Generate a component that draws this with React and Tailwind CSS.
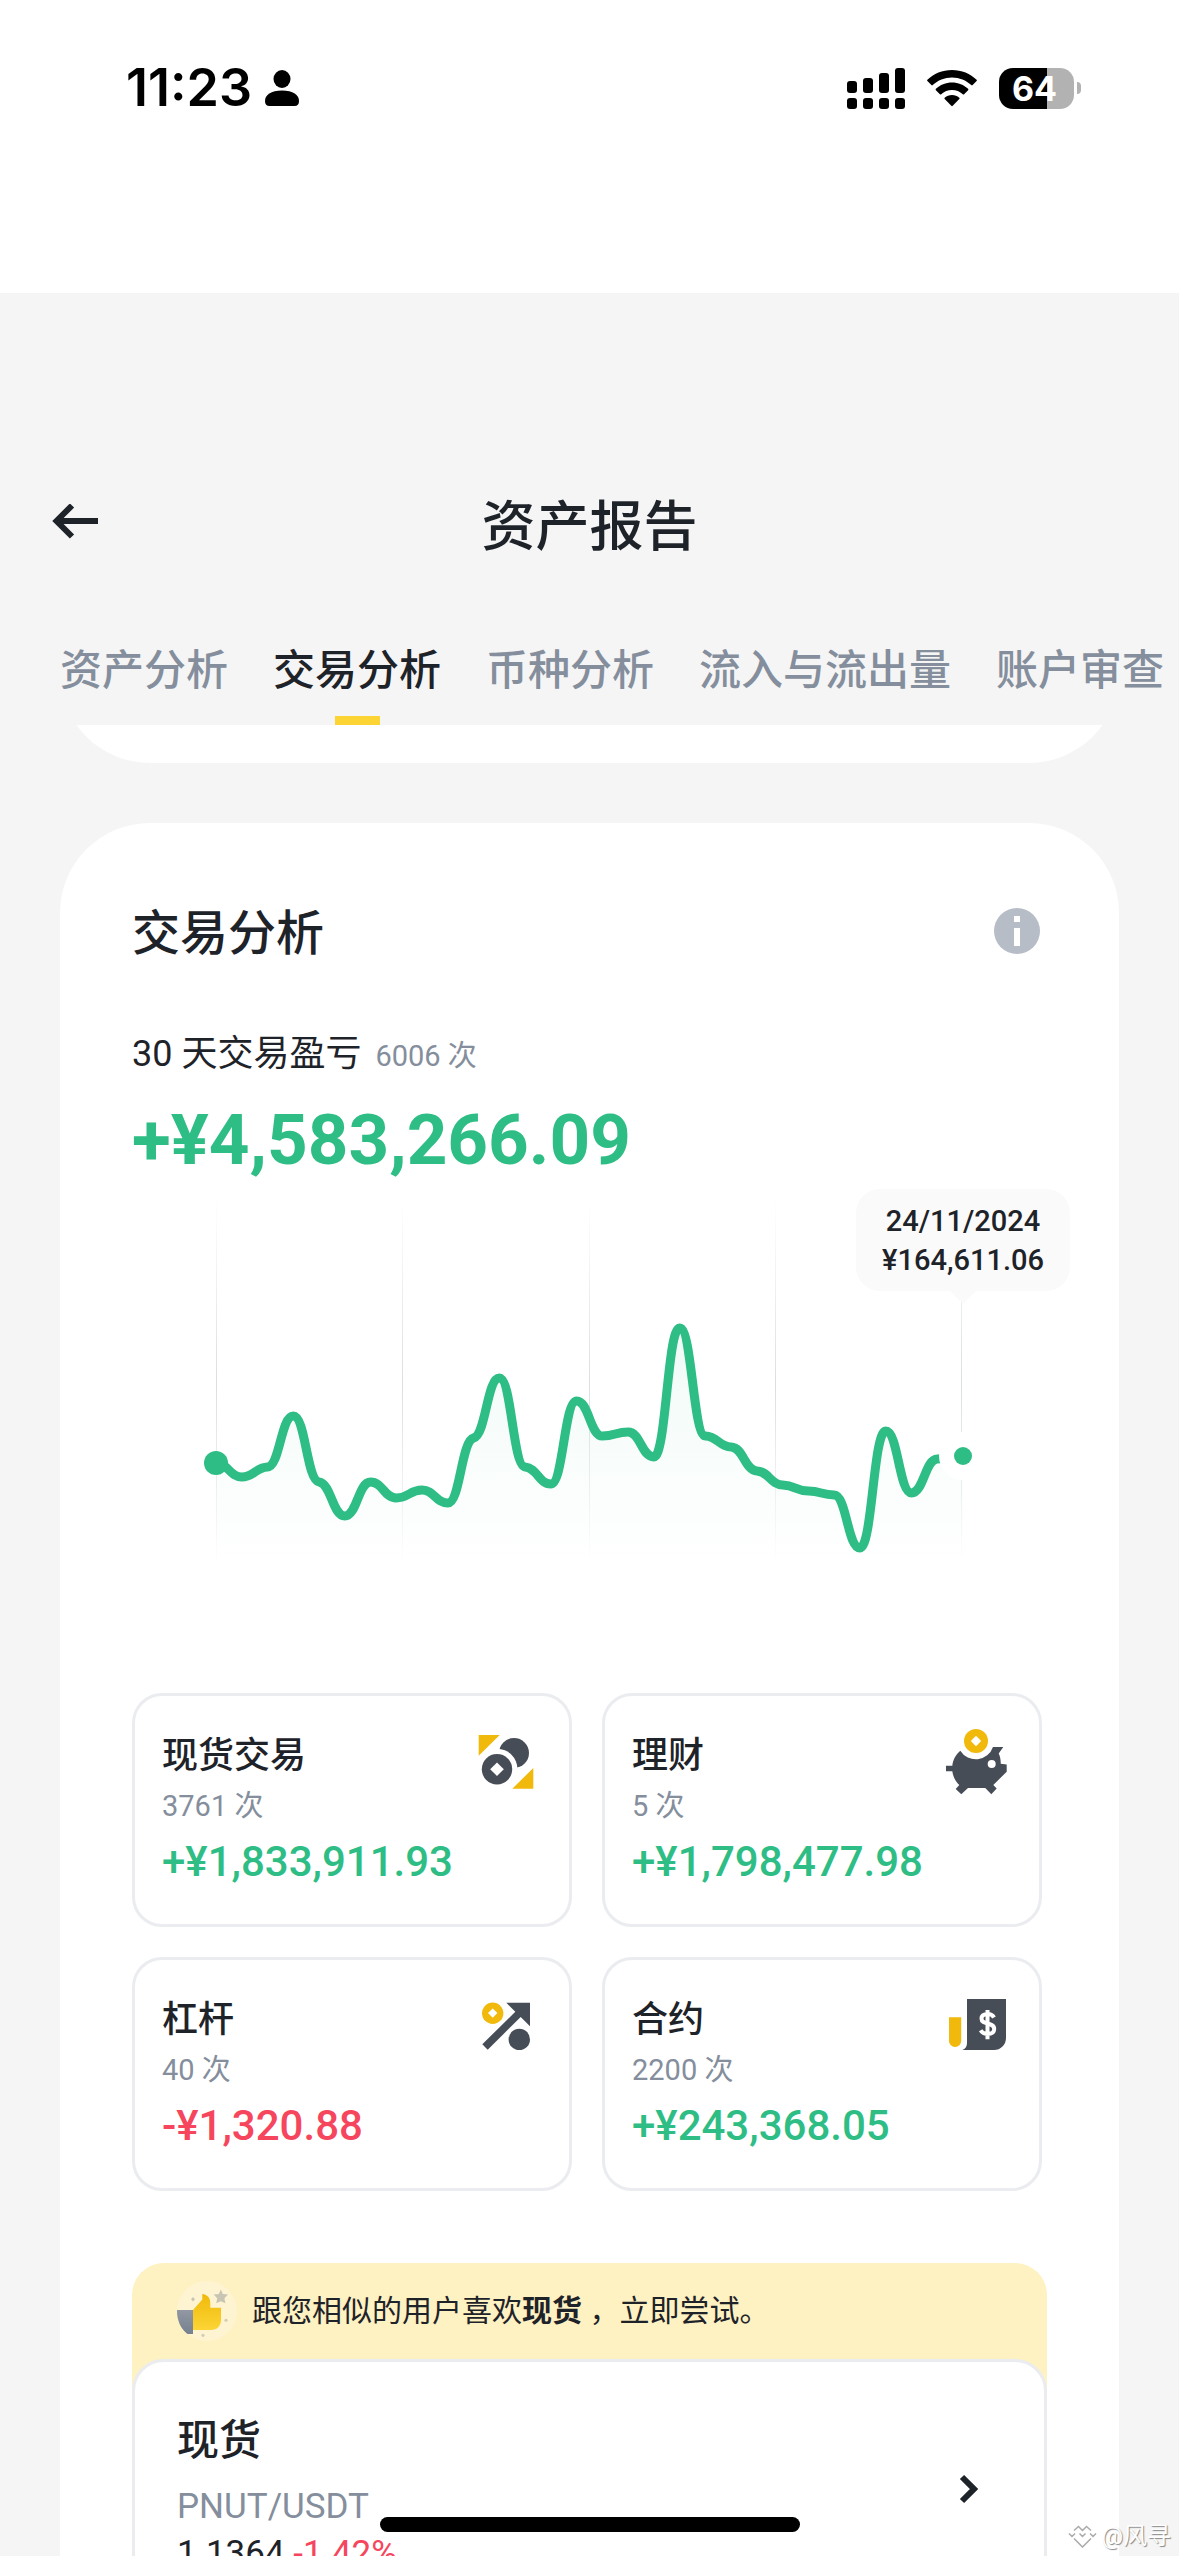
import React from "react";

const GREEN = "#2EBD85";
const DARK = "#474D57";
const GOLD = "#F0B90B";

const CHART_TOP = 1180;
const POINTS = [
  1463, 1477, 1467, 1416, 1482, 1516, 1482, 1498, 1490, 1503, 1438, 1378, 1467, 1484, 1401,
  1436, 1432, 1457, 1328, 1436, 1447, 1471, 1485, 1491, 1495, 1548, 1431, 1493, 1459, 1456,
].map((y, i) => [84 + (i * 747) / 29, y - CHART_TOP]);

// Monotone cubic interpolation through the daily values.
function smoothPath(points) {
  const n = points.length;
  const slope = (a, b) => (b[1] - a[1]) / (b[0] - a[0]);
  const tangents = points.map((p, i) => {
    if (i === 0 || i === n - 1) return 0;
    const s0 = slope(points[i - 1], p);
    const s1 = slope(p, points[i + 1]);
    if (s0 * s1 <= 0) return 0;
    return Math.sign(s0) * 0.1 * Math.min(Math.abs(s0), Math.abs(s1));
  });
  let d = `M${points[0][0]},${points[0][1]}`;
  for (let i = 1; i < n; i++) {
    const [x0, y0] = points[i - 1];
    const [x1, y1] = points[i];
    const h = (x1 - x0) * 0.48;
    d += `C${x0 + h},${y0 + tangents[i - 1] * h} ${x1 - h},${y1 - tangents[i] * h} ${x1},${y1}`;
  }
  return d;
}

function StatusBar() {
  return (
    <div className="flex h-[293px] shrink-0 items-start justify-between bg-white pl-[126px] pr-[98px] pt-14">
      <div className="flex h-16 items-center gap-[13px] text-black">
        <span className="font-['Inter'] text-[52px] font-semibold leading-[64px]">11:23</span>
        <svg width="34" height="36" viewBox="0 0 34 36" fill="#000" aria-hidden="true">
          <ellipse cx="17" cy="9" rx="8.5" ry="9" />
          <path d="M0 31C0 25 6 20.5 17 20.5S34 25 34 31c0 3.500-1.500 5-4.500 5h-25C1.500 36 0 34.500 0 31Z" />
        </svg>
      </div>
      <div className="flex h-16 items-center gap-[22px]">
        <svg width="58" height="41" viewBox="0 0 58 41" fill="#000" aria-hidden="true">
          <rect x="0" y="13" width="10" height="12" rx="3" />
          <rect x="16" y="10" width="10" height="15" rx="3" />
          <rect x="32" y="5" width="10" height="20" rx="3" />
          <rect x="48" y="0" width="10" height="25" rx="3" />
          <rect x="0" y="30" width="10" height="11" rx="3" />
          <rect x="16" y="30" width="10" height="11" rx="3" />
          <rect x="32" y="30" width="10" height="11" rx="3" />
          <rect x="48" y="30" width="10" height="11" rx="3" />
        </svg>
        <svg width="50" height="38" viewBox="0 0 50 38" aria-hidden="true">
          <path d="M25 1C15.500 1 6.500 4.700 0.400 10.800a1 1 0 0 0 0 1.300l4 4a1 1 0 0 0 1.300 0C10.800 11.200 17.600 8.400 25 8.400s14.200 2.800 19.300 7.700a1 1 0 0 0 1.300 0l4-4a1 1 0 0 0 0-1.300C43.500 4.700 34.500 1 25 1Z" />
          <path d="M25 13.500c-6.200 0-11.900 2.400-16.100 6.300a1 1 0 0 0 0 1.400l4 4a1 1 0 0 0 1.300 0c2.900-2.600 6.700-4.200 10.800-4.200s7.900 1.600 10.800 4.200a1 1 0 0 0 1.300 0l4-4a1 1 0 0 0 0-1.400C36.900 15.900 31.200 13.500 25 13.500Z" />
          <path d="M25 26c-2.800 0-5.300 1-7.300 2.700a1 1 0 0 0 0 1.400l6.600 6.700a1 1 0 0 0 1.400 0l6.600-6.700a1 1 0 0 0 0-1.400C30.300 27 27.800 26 25 26Z" />
        </svg>
        <div className="flex items-center gap-[3px]">
          <div className="flex h-[41px] w-[75px] items-center justify-center rounded-[14px] bg-linear-to-r from-black from-64% to-[#B2B2B2] to-64% pr-1">
            <span className="font-['Inter'] text-[34px] font-bold leading-[41px] text-white">64</span>
          </div>
          <div className="h-3 w-1 rounded-r-full bg-[#B2B2B2]" />
        </div>
      </div>
    </div>
  );
}

const TABS = ["资产分析", "交易分析", "币种分析", "流入与流出量", "账户审查"];

function Header() {
  return (
    <header className="shrink-0 pt-[195px]">
      <div className="grid h-20 grid-cols-[1fr_auto_1fr] items-center px-[52px]">
        <button type="button" aria-label="返回" className="w-12 justify-self-start pb-3">
          <svg width="48" height="36" viewBox="0 0 48 36" fill="none" stroke="#1E2329" strokeWidth="6" aria-hidden="true">
            <path d="M46 17H5" />
            <path d="M20 1.500 4.500 17 20 32.500" />
          </svg>
        </button>
        <h1 className="text-[54px] font-medium leading-[80px]">资产报告</h1>
      </div>
      <nav className="mt-[73px] flex gap-[45px] overflow-hidden whitespace-nowrap pl-[60px]">
        {TABS.map((tab) => {
          const active = tab === "交易分析";
          return (
            <button
              key={tab}
              type="button"
              className={
                "flex shrink-0 flex-col items-center gap-[15px] text-[42px] font-medium leading-[60px] " +
                (active ? "text-[#1E2329]" : "text-[#848E9C]")
              }
            >
              {tab}
              <span className={"h-[9px] w-[45px] " + (active ? "bg-[#FCD535]" : "bg-transparent")} />
            </button>
          );
        })}
      </nav>
    </header>
  );
}

function Chart() {
  const line = smoothPath(POINTS);
  const grid = [84, 270, 457, 643, 829];
  return (
    <div className="relative">
      <svg className="block w-full" viewBox="0 0 915 420" role="img" aria-label="30 天交易盈亏走势">
        <defs>
          <linearGradient id="area" x1="0" y1="140" x2="0" y2="385" gradientUnits="userSpaceOnUse">
            <stop offset="0" stopColor={GREEN} stopOpacity="0.07" />
            <stop offset="1" stopColor={GREEN} stopOpacity="0" />
          </linearGradient>
          <linearGradient id="grid" x1="0" y1="20" x2="0" y2="385" gradientUnits="userSpaceOnUse">
            <stop offset="0" stopColor="#DCDEE0" stopOpacity="0" />
            <stop offset="0.5" stopColor="#DCDEE0" />
            <stop offset="1" stopColor="#DCDEE0" stopOpacity="0" />
          </linearGradient>
        </defs>
        {grid.map((x) => (
          <rect key={x} x={x} y="20" width="1" height="365" fill="url(#grid)" />
        ))}
        <path d={`${line}V385H84Z`} fill="url(#area)" />
        <path d={line} fill="none" stroke={GREEN} strokeWidth="9" strokeLinejoin="round" />
        <circle cx="84" cy="283" r="12" fill={GREEN} />
        <circle cx="831" cy="276" r="24" fill="#FFF" />
        <circle cx="831" cy="276" r="9" fill={GREEN} />
      </svg>
      <div className="absolute -right-[23px] top-[9px] flex w-[214px] flex-col items-center">
        <div className="w-full rounded-3xl bg-[#FAFAFA] pb-[11px] pt-[13px] text-center text-[29px] font-medium leading-[39px]">
          <div>24/11/2024</div>
          <div>¥164,611.06</div>
        </div>
        <svg width="26" height="13" viewBox="0 0 26 13" fill="#FAFAFA" aria-hidden="true">
          <path d="M0 0h26L14 12q-1 1-2 0Z" />
        </svg>
      </div>
    </div>
  );
}

function SpotIcon() {
  return (
    <svg width="72" height="72" viewBox="0 0 72 72" aria-hidden="true">
      <path d="M63.300 42v20.700h-21Z" fill={GOLD} />
      <circle cx="44" cy="27" r="15" fill={DARK} />
      <circle cx="27" cy="43.300" r="20.500" fill="#FFF" />
      <path d="M8.700 9h21L8.700 29.700Z" fill={GOLD} />
      <circle cx="27" cy="43.300" r="15.200" fill={DARK} />
      <path d="m27 36.500 6.800 6.800-6.800 6.800-6.800-6.800Z" fill="#FFF" />
    </svg>
  );
}

function EarnIcon() {
  return (
    <svg width="72" height="72" viewBox="0 0 72 72" aria-hidden="true">
      <path
        d="M6 39.700h6.300C13 33.500 16 28.300 20.300 24.700a18.200 18.200 0 0 0 32.700-3.700h10.300l-4.600 6.500c1.400 3 2.200 6.500 2 10.200l6 0.800v7.200L53.300 59l3.400 3.500-5.400 5.800-6-6.300H28l-6.700 6.300-5.600-5.300 3.600-4c-3.800-3.600-6.300-8.400-7-13.700H6Z"
        fill={DARK}
      />
      <circle cx="36" cy="15" r="12" fill={GOLD} />
      <path d="m36 9.800 5.200 5.200-5.200 5.200-5.200-5.200Z" fill="#FFF" />
      <circle cx="51.700" cy="38" r="4" fill="#FFF" />
    </svg>
  );
}

function MarginIcon() {
  return (
    <svg width="72" height="72" viewBox="0 0 72 72" aria-hidden="true">
      <circle cx="22.700" cy="23.200" r="10.700" fill={GOLD} />
      <path d="m22.700 18.400 4.700 4.700-4.700 4.700-4.700-4.700Z" fill="#FFF" />
      <path d="M36.300 12.700H60v23.600l-9.300-9.300-33 32.700-5.400-5.400 33-32.600Z" fill={DARK} />
      <circle cx="49.300" cy="49.400" r="10.700" fill={DARK} />
    </svg>
  );
}

function FuturesIcon() {
  return (
    <svg width="72" height="72" viewBox="0 0 72 72" aria-hidden="true">
      <path d="M9 27.300h12.200V51a6.100 6.100 0 0 1-12.200 0Z" fill={GOLD} />
      <path d="M27 9h39v39a12 12 0 0 1-12 12H22.300c3-1.200 4.700-3.400 4.700-7Z" fill={DARK} />
      <path
        d="M54 27.500C52.800 25.200 50.800 24 47.800 24c-3.800 0-6.300 1.700-6.300 4.700 0 6.800 12.700 2.800 12.700 10.300 0 3.200-2.500 5-6.300 5-3.300 0-5.800-1.300-7.200-3.800M47.500 20v29.300"
        fill="none"
        stroke="#FFF"
        strokeWidth="4"
      />
    </svg>
  );
}

const TILES = [
  { name: "现货交易", count: "3761 次", amount: "+¥1,833,911.93", icon: <SpotIcon /> },
  { name: "理财", count: "5 次", amount: "+¥1,798,477.98", icon: <EarnIcon /> },
  { name: "杠杆", count: "40 次", amount: "-¥1,320.88", icon: <MarginIcon /> },
  { name: "合约", count: "2200 次", amount: "+¥243,368.05", icon: <FuturesIcon /> },
];

function Tile({ name, count, amount, icon }) {
  return (
    <button
      type="button"
      className="flex items-start justify-between rounded-[30px] border-3 border-[#EAECEF] px-[27px] py-[30px] text-left"
    >
      <div>
        <div className="text-4xl font-medium leading-[60px]">{name}</div>
        <div className="text-[29px] leading-10 text-[#848E9C]">{count}</div>
        <div
          className={
            "mt-1 text-[42px] font-medium leading-[64px] " +
            (amount.startsWith("-") ? "text-[#F6465D]" : "text-[#2EBD85]")
          }
        >
          {amount}
        </div>
      </div>
      <div className="-ml-20 shrink-0">{icon}</div>
    </button>
  );
}

function ThumbIcon() {
  return (
    <svg width="60" height="60" viewBox="0 0 60 60" aria-hidden="true">
      <defs>
        <linearGradient id="thumb" x1="0" y1="0" x2="0" y2="1">
          <stop offset="0" stopColor="#F0B90B" />
          <stop offset="1" stopColor="#FCD535" />
        </linearGradient>
        <linearGradient id="sleeve" x1="0" y1="0" x2="0" y2="1">
          <stop offset="0" stopColor="#9298A3" />
          <stop offset="1" stopColor="#76808F" />
        </linearGradient>
      </defs>
      <circle cx="30" cy="30" r="30" fill="#FEF4D1" />
      <path d="M0 29h16v24h-5.500C4 48 0 40 0 30Z" fill="url(#sleeve)" />
      <path d="M16 29l9.300-10.500V13c5 0.500 8 4 8 9v4.700H44V39c0 6-4 10-10 10H16Z" fill="url(#thumb)" />
      <path d="m43.800 8.600 2 4.500 5.200 0.500-3.600 3.600 1 5-4.600-2-4.600 2 1-5-3.600-3.600 5.200-0.500Z" fill="#C9C5B4" />
      <path d="m16 16 2 2.300-2 2.300-2-2.300Z" fill="#C9C5B4" />
      <circle cx="49" cy="39.300" r="1.600" fill="#D3CDB5" />
      <circle cx="26" cy="54.300" r="1.600" fill="#D3CDB5" />
    </svg>
  );
}

function Recommendation() {
  return (
    <section className="mt-[72px] rounded-t-[32px] bg-[#FEF1C2]">
      <div className="flex h-24 items-center gap-[15px] pl-[45px]">
        <ThumbIcon />
        <p className="text-[30px] leading-10">
          跟您相似的用户喜欢<span className="font-bold">现货</span> ，立即尝试。
        </p>
      </div>
      <a
        href="#spot"
        className="flex items-center justify-between rounded-[32px] border-3 border-[#EAECEF] bg-white pb-10 pl-[42px] pr-[63px] pt-[47px]"
      >
        <div>
          <h3 className="text-[42px] font-medium leading-[64px]">现货</h3>
          <div className="mt-[10px] text-[35px] leading-[48px] text-[#848E9C]">PNUT/USDT</div>
          <div className="text-[35px] leading-[46px]">
            1.1364 <span className="text-[#F6465D]">-1.42%</span>
          </div>
        </div>
        <svg className="mb-2" width="24" height="32" viewBox="0 0 24 32" fill="none" stroke="#1E2329" strokeWidth="6" aria-hidden="true">
          <path d="M5 4l12 12L5 28" />
        </svg>
      </a>
    </section>
  );
}

function Watermark() {
  return (
    <div className="absolute bottom-0.5 right-2 flex items-center gap-1 text-[24px] leading-9 text-white [text-shadow:1px_1px_1px_#888]">
      <svg width="29" height="24" viewBox="0 0 29 24" fill="none" strokeWidth="1.5" aria-hidden="true">
        <g stroke="#AAA">
          <path d="M6 6.500 10.500 2.500 14.500 6.500 18.500 2.500 23 6.500" />
          <path d="M1 9.500 4 12.500 7 9.500M11.500 9.500l3 3 3-3M22 9.500l3 3 3-3" />
          <path d="M6 14.500l8.500 8.500 8.500-8.500" />
        </g>
      </svg>
      <span>@风寻</span>
    </div>
  );
}

export default function App() {
  return (
    <div className="relative flex h-screen flex-col overflow-hidden bg-[#F5F5F5] font-['Roboto','Noto_Sans_CJK_SC',sans-serif] text-[#1E2329]">
      <StatusBar />
      <Header />
      <main className="min-h-0 flex-1 overflow-hidden px-[60px]">
        <div className="-mt-[162px] h-[200px] rounded-b-[90px] bg-white" />
        <section className="mt-[60px] rounded-[90px] bg-white px-[72px] pb-20 pt-[79px]">
          <div className="flex h-16 items-center justify-between pr-[7px]">
            <h2 className="text-5xl font-medium leading-[64px]">交易分析</h2>
            <button type="button" aria-label="说明" className="pb-1.5">
              <svg width="46" height="46" viewBox="0 0 46 46" aria-hidden="true">
                <circle cx="23" cy="23" r="23" fill="#B7BDC6" />
                <path d="M20 8h6v6h-6ZM20 20h6v18h-6Z" fill="#FFF" />
              </svg>
            </button>
          </div>
          <div className="mt-16 flex h-12 items-baseline gap-[14px]">
            <span className="text-4xl leading-[48px]">30 天交易盈亏</span>
            <span className="text-[29px] leading-[48px] text-[#848E9C]">6006 次</span>
          </div>
          <div className="mt-[22px] text-[71px] font-bold leading-[80px] text-[#2EBD85]">+¥4,583,266.09</div>
          <Chart />
          <div className="mt-[93px] grid grid-cols-2 gap-[30px] pr-[5px]">
            {TILES.map((tile) => (
              <Tile key={tile.name} {...tile} />
            ))}
          </div>
          <Recommendation />
        </section>
      </main>
      <div className="absolute bottom-6 left-1/2 h-[15px] w-[420px] -translate-x-1/2 rounded-full bg-black" />
      <Watermark />
    </div>
  );
}
